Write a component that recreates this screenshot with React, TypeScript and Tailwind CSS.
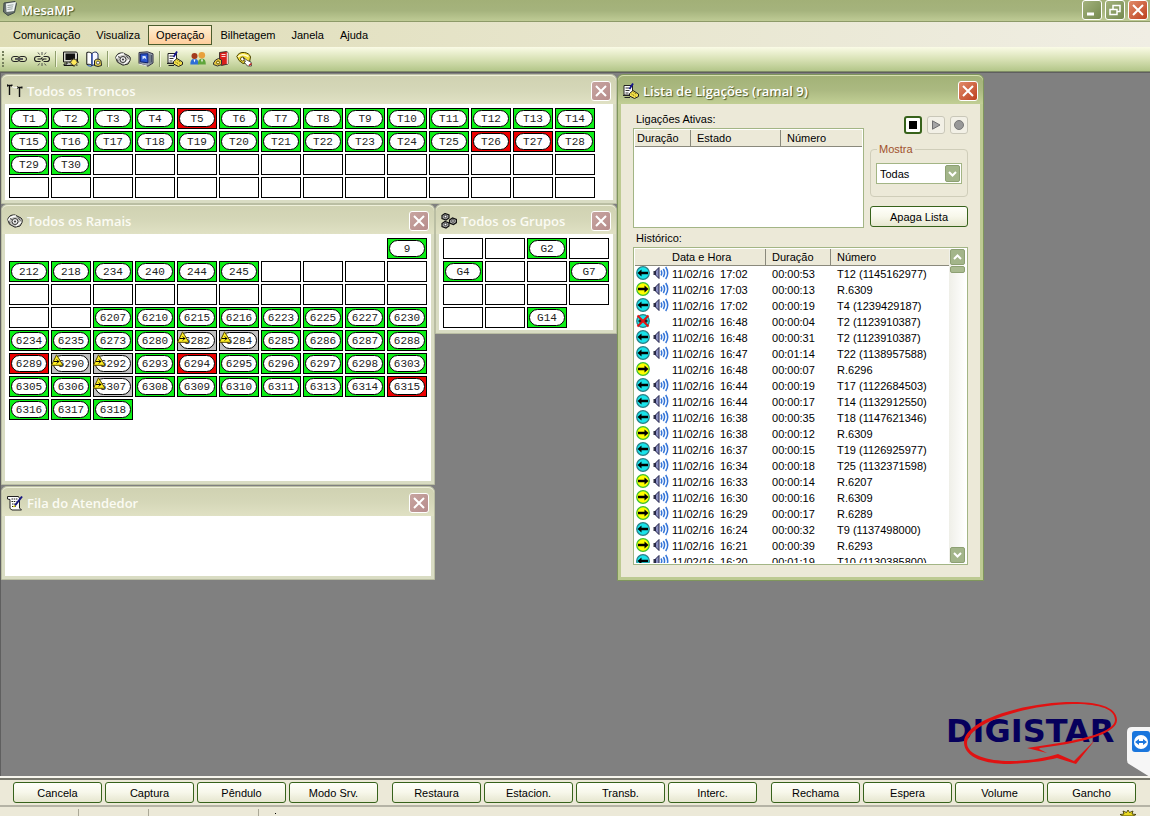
import { useState, type ReactNode } from 'react'
import clsx from 'clsx'

type CallKind = 'in' | 'out' | 'missed'

interface Call {
  kind: CallKind
  recorded: boolean
  date: string
  duration: string
  number: string
}

const history: Call[] = [
  { kind: 'in', recorded: true, date: '11/02/16  17:02', duration: '00:00:53', number: 'T12 (1145162977)' },
  { kind: 'out', recorded: true, date: '11/02/16  17:03', duration: '00:00:13', number: 'R.6309' },
  { kind: 'in', recorded: true, date: '11/02/16  17:02', duration: '00:00:19', number: 'T4 (1239429187)' },
  { kind: 'missed', recorded: false, date: '11/02/16  16:48', duration: '00:00:04', number: 'T2 (1123910387)' },
  { kind: 'in', recorded: true, date: '11/02/16  16:48', duration: '00:00:31', number: 'T2 (1123910387)' },
  { kind: 'in', recorded: true, date: '11/02/16  16:47', duration: '00:01:14', number: 'T22 (1138957588)' },
  { kind: 'out', recorded: false, date: '11/02/16  16:48', duration: '00:00:07', number: 'R.6296' },
  { kind: 'in', recorded: true, date: '11/02/16  16:44', duration: '00:00:19', number: 'T17 (1122684503)' },
  { kind: 'in', recorded: true, date: '11/02/16  16:44', duration: '00:00:17', number: 'T14 (1132912550)' },
  { kind: 'in', recorded: true, date: '11/02/16  16:38', duration: '00:00:35', number: 'T18 (1147621346)' },
  { kind: 'out', recorded: true, date: '11/02/16  16:38', duration: '00:00:12', number: 'R.6309' },
  { kind: 'in', recorded: true, date: '11/02/16  16:37', duration: '00:00:15', number: 'T19 (1126925977)' },
  { kind: 'in', recorded: true, date: '11/02/16  16:34', duration: '00:00:18', number: 'T25 (1132371598)' },
  { kind: 'out', recorded: true, date: '11/02/16  16:33', duration: '00:00:14', number: 'R.6207' },
  { kind: 'out', recorded: true, date: '11/02/16  16:30', duration: '00:00:16', number: 'R.6309' },
  { kind: 'out', recorded: true, date: '11/02/16  16:29', duration: '00:00:17', number: 'R.6289' },
  { kind: 'in', recorded: true, date: '11/02/16  16:24', duration: '00:00:32', number: 'T9 (1137498000)' },
  { kind: 'out', recorded: true, date: '11/02/16  16:21', duration: '00:00:39', number: 'R.6293' },
  { kind: 'in', recorded: true, date: '11/02/16  16:20', duration: '00:01:19', number: 'T10 (1130385800)' }
]

// '' is an empty position, null leaves a hole in the grid
type Slot = string | null

const trunks: Slot[] = Array.from({ length: 56 }, (_, i) => (i < 30 ? `T${i + 1}` : ''))

const extensions: Slot[] = [
  null, null, null, null, null, null, null, null, null, '9',
  '212', '218', '234', '240', '244', '245', '', '', '', '',
  '', '', '', '', '', '', '', '', '', '',
  '', '', '6207', '6210', '6215', '6216', '6223', '6225', '6227', '6230',
  '6234', '6235', '6273', '6280', '6282', '6284', '6285', '6286', '6287', '6288',
  '6289', '6290', '6292', '6293', '6294', '6295', '6296', '6297', '6298', '6303',
  '6305', '6306', '6307', '6308', '6309', '6310', '6311', '6313', '6314', '6315',
  '6316', '6317', '6318'
]

const groups: Slot[] = ['', '', 'G2', '', 'G4', '', '', 'G7', '', '', '', '', '', '', 'G14']

const busy = ['T5', 'T26', 'T27', '6289', '6294', '6315']
const diverted = ['6282', '6284', '6290', '6292', '6307']

const menus = ['Comunicação', 'Visualiza', 'Operação', 'Bilhetagem', 'Janela', 'Ajuda']

const commands = [
  ['Cancela', 'Captura', 'Pêndulo', 'Modo Srv.'],
  ['Restaura', 'Estacion.', 'Transb.', 'Interc.'],
  ['Rechama', 'Espera', 'Volume', 'Gancho']
]

/* ---------- icons ---------- */

function Icon({ children }: { children: ReactNode }) {
  return (
    <svg viewBox="0 0 16 16" className="size-4 shrink-0" fill="none" aria-hidden="true">
      {children}
    </svg>
  )
}

const LinkIcon = () => (
  <Icon>
    <rect x="0.5" y="5.5" width="8" height="5" rx="2.5" stroke="#222" />
    <rect x="7.5" y="5.5" width="8" height="5" rx="2.5" stroke="#222" />
    <path d="M4 8h8" stroke="#222" strokeWidth="2" />
    <path d="M4 8h8" stroke="#ddd" strokeWidth="0.6" />
  </Icon>
)

const UnlinkIcon = () => (
  <Icon>
    <path d="M6.5 5.5H3a2.5 2.5 0 0 0 0 5h3.5M9.5 5.5H13a2.5 2.5 0 0 1 0 5H9.5M3.500 8H7l1.500-1.500M12.500 8H9.500L8 9.500" stroke="#222" strokeWidth="1.200" />
    <path d="M8 1v3M8 12v3M4 1.500l1.500 2M12 1.500l-1.500 2M4 14.500l1.500-2M12 14.500l-1.500-2" stroke="#444" strokeWidth="0.900" />
  </Icon>
)

const ScreenIcon = () => (
  <Icon>
    <path d="M.5 1h13l1 1.500V11H.5z" fill="#d8d8d0" stroke="#111" />
    <path d="M2.500 2.500h9.500V9H2.500z" fill="#111" />
    <path d="M4 11v2H1v1.500h10" fill="#bbb" stroke="#111" />
    <path d="M11 7l1 2 2-1-.6 2.200 2.400 1-2.400 1 .8 2.300-2.200-.9-1 2-1-2-2.200.9.800-2.200-2-1 2-1.100-.8-2.100 2 .9z" fill="#ffe95a" stroke="#222" strokeWidth="0.700" />
  </Icon>
)

const BookIcon = () => (
  <Icon>
    <path d="M.8 1.500c2-.8 3.700 0 5.200 1v12c-1.500-1.200-3.200-1.500-5.200-1z" fill="#fff" stroke="#111" />
    <path d="M6 2.500c1.500-1.500 3.500-1.800 5-1l1 1.500v11H7l-1 .5z" fill="#f7f7ff" stroke="#16265a" />
    <path d="M1.500 14.500l4 1M6 3v11" stroke="#2a55c9" />
    <path d="M8.500 10c.5-2.500 6-2.500 6.500 0l.5 4.500-3.500 1-3.500-1z" fill="#e6d44c" stroke="#222" />
    <circle cx="12" cy="11.700" r="1.600" fill="#fff" stroke="#555" />
  </Icon>
)

const PhoneIcon = () => (
  <Icon>
    <path d="M.8 7C1 3.500 4 1.500 8 2l6 3c1.500 1.200 1.500 3 1 4.500l-2 3.500-5 1.200-5.500-3z" fill="#c9c9c4" stroke="#222" />
    <path d="M1 7.500c2-3 4.500-4.700 8-4.500M9 13l5-4" stroke="#fff" strokeWidth="1.300" />
    <circle cx="8" cy="8.500" r="3" fill="#eee" stroke="#333" />
    <circle cx="8" cy="8.500" r="1.100" fill="#444" />
    <path d="M1 8l2.500 2M3 5.500l2 1M11 4.500l2.500 3" stroke="#444" />
  </Icon>
)

const TerminalIcon = () => (
  <Icon>
    <path d="M1 1.500l8.500-.7 5.500 2V12l-5 3.200-9-2.700z" fill="#9aa1b0" stroke="#334" />
    <path d="M2.300 3L10 2.800v9l-7.700-1z" fill="#2c56cf" stroke="#0b1d66" />
    <path d="M4.500 8.500V5h3l1 3.500-2-1.500z" fill="#d5e5ff" />
    <path d="M12 3.500v9M13.500 4v7.500" stroke="#4b5568" />
    <path d="M1 13l8 2" stroke="#eee" />
  </Icon>
)

const NoteIcon = () => (
  <Icon>
    <path d="M1 2.500h8.500v9.500H1z" fill="#fff" stroke="#222" />
    <path d="M2.500 5H6M2.500 7.500h4M2.500 10h3" stroke="#333" />
    <path d="M10 .5L6.500 6" stroke="#14148c" strokeWidth="1.800" />
    <path d="M0 12.500h6M1.500 14.500H7" stroke="#222" />
    <path d="M6.500 10.500L10 7.500l5.500 3.500v2.500L11.500 15.500l-5-2.500z" fill="#f3e14b" stroke="#222" />
    <path d="M8.500 11l4 2.300M10.500 9.500l3.500 2" stroke="#6a5c00" strokeDasharray="1 1" />
  </Icon>
)

const PeopleIcon = () => (
  <Icon>
    <path d="M.3 13.500c0-4 1.500-6 4.200-6s4 2 4 6z" fill="#2f6fd6" />
    <circle cx="4.500" cy="4.900" r="3" fill="#a33a1c" />
    <path d="M7.800 13.500c0-4 1.500-6 4.200-6s3.800 2 3.800 6z" fill="#5fa53a" />
    <circle cx="11.800" cy="4.200" r="3.300" fill="#e8a13c" />
    <path d="M3.500 8.500l1 3 1-3M11 8.500l1 3 1-3" fill="#fff" />
  </Icon>
)

const DirectoryIcon = () => (
  <Icon>
    <path d="M6.500 1.500l7-1 1.500 1v11.500l-6.500 1.500-2-1.500z" fill="#d9201d" stroke="#222" strokeWidth="0.800" />
    <path d="M14.300 1.500v11.500" stroke="#fff" />
    <path d="M8.500 3.500h4M8.500 5.500h4" stroke="#ffd8d8" />
    <path d="M.5 12l2-3 3-1.500 3 1.500v4.500l-4 1.500-4-1.500z" fill="#e8c83e" stroke="#333" />
    <circle cx="5" cy="11.500" r="1.500" fill="#fff6b5" stroke="#665500" />
  </Icon>
)

const DialIcon = () => (
  <Icon>
    <path d="M.8 5.500C2 2.500 5 1 8.500 1.500c3 .5 5.500 2 6 4.500l-1 5L7 12.500l-4-3z" fill="#f1dc3c" stroke="#4a4200" />
    <path d="M2 6c2-2.500 6-3 10.500-.5" stroke="#fffbd0" strokeWidth="1.500" />
    <circle cx="6.500" cy="8" r="2" fill="#fff" stroke="#665500" />
    <path d="M7 6.500l4.500 3 3.500 1.500.5 4h-4L8 11l1.500-.5z" fill="#fff" stroke="#222" strokeWidth="0.700" />
    <path d="M13 14.500l2.500-2" stroke="#c01a1a" strokeWidth="1.500" />
  </Icon>
)

const TrunkIcon = () => (
  <Icon>
    <path d="M0 2.500h5M2.500 3v9M10 4.500h5M12.500 5v9" stroke="#111" strokeWidth="1.400" />
    <path d="M.5 1.500v2M5 1.500v2M10.500 3.500v2M15 3.500v2" stroke="#111" />
    <path d="M5 3.500q2.500 2 5.500 1" stroke="#fff" />
  </Icon>
)

const GroupIcon = () => (
  <Icon>
    {[[4.5, 3.5], [4.5, 11.5], [12, 8]].map(([x, y]) => (
      <g key={`${x}${y}`}>
        <path d={`M${x - 3.5} ${y - 1}l3-2 4 1.500v3l-3 2-4-1.500z`} fill="#aaa" stroke="#111" strokeWidth="1.200" />
        <circle cx={x} cy={y} r="1.300" fill="#fff" stroke="#222" strokeWidth="0.800" />
      </g>
    ))}
  </Icon>
)

const QueueIcon = () => (
  <Icon>
    <path d="M.5 1.500h11l1 2V13l2 2H5l-2-1.500V4.500L.5 4z" fill="#fff" stroke="#222" />
    <path d="M4.500 4h6M4.500 6.500h5M5 9h4M5 11.500h4" stroke="#222" strokeDasharray="1.500 .7" />
    <path d="M15 1.500L8 10.500" stroke="#15157e" strokeWidth="2" />
    <path d="M8 10.500l-1.500 1.500" stroke="#e2d000" strokeWidth="1.500" />
  </Icon>
)

const AppIcon = () => (
  <Icon>
    <path d="M2 3l11-1.500 1.500 2-2 9-6.500 3L1.500 12z" fill="#69736f" stroke="#3f4948" />
    <path d="M4 3.500l10-1.500L12 11l-7.500 1z" fill="#eef3f2" />
    <path d="M5.500 5.500l6-.7M5.500 7.500l5.500-.7M5.500 9.500l5-.7" stroke="#9aa6a4" />
  </Icon>
)

function CallIcon({ kind }: { kind: CallKind }) {
  return (
    <svg viewBox="0 0 14 14" className="size-3.5" aria-hidden="true">
      <circle cx="7" cy="7" r="6.300" fill={kind === 'out' ? '#ffff00' : '#19e3ea'} stroke={kind === 'out' ? '#3fbf2f' : '#2a7f86'} strokeWidth="1.200" />
      {kind === 'in' && <path d="M1.500 7l4-3.500v2.200h6.500v2.600H5.500v2.200z" fill="#000" />}
      {kind === 'out' && <path d="M12.500 7l-4-3.500v2.200H2v2.600h6.500v2.200z" fill="#000" />}
      {kind === 'missed' && (
        <>
          <path d="M2 7l3-3v2h4V4l3 3-3 3V8H5v2z" fill="#222" />
          <path d="M1.500 1.500l11 11M12.500 1.500l-11 11" stroke="#e01515" strokeWidth="2" />
        </>
      )}
    </svg>
  )
}

const SpeakerIcon = () => (
  <svg viewBox="0 0 16 14" className="h-3.5 w-4" fill="none" aria-hidden="true">
    <path d="M.5 5H2v4H.5z" fill="#334" />
    <path d="M2.500 5L6 1.500v11L2.500 9z" fill="#8a8fc0" stroke="#23234a" />
    <path d="M8 4.500q1.500 2.500 0 5M10.300 3q2.500 4 0 8M12.700 1q4 6 0 12" stroke="#3374d8" strokeWidth="1.500" />
  </svg>
)

const WarnIcon = () => (
  <svg viewBox="0 0 13 12" className="absolute -left-px top-0 h-3 w-[13px]" fill="none" aria-hidden="true">
    <path d="M5.500.8L12 11.300H.5z" fill="#ffee22" stroke="#554a00" />
    <path d="M3 7.500h5M5.800 5.500l2 2-2 2" stroke="#000" />
  </svg>
)

/* ---------- shared controls ---------- */

function CaptionButton({ label, tone, children }: { label: string; tone: 'green' | 'red' | 'dim'; children: ReactNode }) {
  return (
    <button
      aria-label={label}
      className={clsx(
        'flex size-5 shrink-0 items-center justify-center rounded-[3px] border border-white',
        tone === 'green' && 'bg-linear-to-br from-[#a3b27d] to-[#768a4f]',
        tone === 'red' && 'bg-linear-to-br from-[#e08a68] to-[#bd3f1d]',
        tone === 'dim' && 'bg-linear-to-br from-[#c7a5a0] to-[#b78c8c]'
      )}
    >
      <svg viewBox="0 0 18 18" className="size-[18px]" fill="none" stroke="#fff" strokeWidth="2" aria-hidden="true">
        {children}
      </svg>
    </button>
  )
}

const closeGlyph = <path d="M4 4l10 10M14 4L4 14" />

function CommandButton({ children }: { children: ReactNode }) {
  return (
    <button className="h-[21px] w-full rounded-[3px] border border-[#37621b] bg-linear-to-b from-[#fffffa] via-[#f7f7ea] to-[#e6e6cf] text-center leading-4">
      {children}
    </button>
  )
}

interface WindowProps {
  title: string
  icon: ReactNode
  active?: boolean
  className: string
  children?: ReactNode
}

function MdiWindow({ title, icon, active, className, children }: WindowProps) {
  return (
    <section
      className={clsx(
        'absolute flex flex-col rounded-t-md border',
        active ? 'border-[#7f965c] bg-[#bdca92]' : 'border-[#babea3] bg-[#d9dcc3]',
        className
      )}
    >
      <header
        className={clsx(
          'flex h-[29px] shrink-0 items-center gap-1 rounded-t-md border-t px-[5px] pt-px',
          active
            ? 'border-[#d6dfb0] bg-linear-to-b from-[#a3b277] via-[#abb981] to-[#c2cf95]'
            : 'border-[#eff0da] bg-linear-to-b from-[#d0d2b2] via-[#d5d7b8] to-[#e0e1c4]'
        )}
      >
        {icon}
        <h2
          className={clsx(
            "grow font-['Open_Sans',sans-serif] text-[13px] font-semibold leading-4",
            active ? 'text-white [text-shadow:1px_1px_1px_#4c5a2b]' : 'text-[#fbfbf3]'
          )}
        >
          {title}
        </h2>
        <CaptionButton label={`Fechar ${title}`} tone={active ? 'red' : 'dim'}>
          {closeGlyph}
        </CaptionButton>
      </header>
      <div className={clsx('mx-[3px] mb-[3px] min-h-0 grow', active ? 'bg-[#ece9d8]' : 'bg-white')}>{children}</div>
    </section>
  )
}

function StatusCell({ slot }: { slot: Slot }) {
  if (slot === null) return <span />
  if (slot === '') return <span className="border border-black bg-white" />
  const isDiverted = diverted.includes(slot)
  return (
    <button
      className={clsx(
        'relative border border-black p-px',
        busy.includes(slot) ? 'bg-[#ee0000]' : isDiverted ? 'bg-[#c0c0c0]' : 'bg-[#0cf016]'
      )}
    >
      <span className="flex h-full items-center justify-center rounded-[9px] border border-black bg-white font-['Liberation_Mono',monospace] leading-3 text-[#222]">
        {slot}
      </span>
      {isDiverted && <WarnIcon />}
    </button>
  )
}

function StatusGrid({ slots, className }: { slots: Slot[]; className: string }) {
  return (
    <div className={clsx('grid auto-rows-[21px] gap-[2px] px-1 pt-1', className)}>
      {slots.map((slot, i) => (
        <StatusCell key={i} slot={slot} />
      ))}
    </div>
  )
}

function ColumnHead({ children }: { children: ReactNode }) {
  return (
    <th className="p-0 font-normal" scope="col">
      <div className="h-4 border-l border-[#8a897c] pl-[6px] leading-4">{children}</div>
    </th>
  )
}

/* ---------- call list ---------- */

function CallList() {
  const [filter, setFilter] = useState('Todas')

  return (
    <div className="flex h-full flex-col px-3 pb-3 pt-[7px]">
      <div className="flex gap-[6px]">
        <div className="flex min-w-0 grow flex-col">
          <h3 className="pl-[3px] leading-4">Ligações Ativas:</h3>
          <div className="mt-px h-[100px] border border-[#a3b585] bg-white p-px">
            <table className="w-full table-fixed border-collapse text-left">
              <colgroup>
                <col className="w-[55px]" />
                <col className="w-[90px]" />
                <col />
              </colgroup>
              <thead className="border-b border-[#8a897c] bg-[#ece9d8]">
                <tr>
                  <th scope="col" className="p-0 pl-[2px] font-normal leading-4">Duração</th>
                  <ColumnHead>Estado</ColumnHead>
                  <ColumnHead>Número</ColumnHead>
                </tr>
              </thead>
            </table>
          </div>
        </div>

        <div className="flex w-[98px] shrink-0 flex-col">
          <div className="mt-[5px] flex justify-end gap-[5px]">
            <button aria-label="Parar" className="flex size-[18px] items-center justify-center rounded-[3px] border-2 border-[#37621b] bg-white">
              <span className="size-2 bg-black" />
            </button>
            <button aria-label="Reproduzir" className="flex size-[18px] items-center justify-center rounded-[3px] border border-[#c9c7b8] bg-[#f2f0e6]">
              <svg viewBox="0 0 10 10" className="size-[10px]" aria-hidden="true">
                <path d="M1.500.8L9 5 1.500 9.200z" fill="#a5a5a5" stroke="#6f6f6f" />
              </svg>
            </button>
            <button aria-label="Gravar" className="flex size-[18px] items-center justify-center rounded-[3px] border border-[#c9c7b8] bg-[#f2f0e6]">
              <span className="size-[10px] rounded-full border border-[#777] bg-[#989898]" />
            </button>
          </div>
          <fieldset className="mt-[9px] h-[54px] rounded-[4px] border border-[#cfcdb9] px-[5px]">
            <legend className="ml-px px-[2px] leading-3 text-[#a0522d]">Mostra</legend>
            <div className="relative mt-2">
              <select
                aria-label="Mostra"
                value={filter}
                onChange={(e) => setFilter(e.target.value)}
                className="h-[21px] w-full appearance-none border border-[#a3b585] bg-white pl-[3px] leading-4"
              >
                <option>Todas</option>
                <option>Ativas</option>
              </select>
              <span className="pointer-events-none absolute right-[2px] top-[2px] flex h-[17px] w-[15px] items-center justify-center rounded-[2px] border border-[#8da073] bg-[#a3b58a]">
                <svg viewBox="0 0 9 6" className="h-[6px] w-[9px]" fill="none" stroke="#fff" strokeWidth="2" aria-hidden="true">
                  <path d="M1 1l3.500 3.500L8 1" />
                </svg>
              </span>
            </div>
          </fieldset>
          <div className="mt-[9px]">
            <CommandButton>Apaga Lista</CommandButton>
          </div>
        </div>
      </div>

      <h3 className="mt-[2px] pl-[3px] leading-4">Histórico:</h3>
      <div className="mt-px flex min-h-0 grow overflow-hidden border border-[#a3b585] bg-white p-px">
        <div className="grow overflow-hidden">
          <table className="w-full table-fixed border-collapse text-left">
            <colgroup>
              <col className="w-[17px]" />
              <col className="w-[20px]" />
              <col className="w-[93px]" />
              <col className="w-[65px]" />
              <col />
            </colgroup>
            <thead className="border-b border-[#8a897c] bg-[#ece9d8]">
              <tr>
                <th colSpan={3} scope="col" className="p-0 pl-[37px] font-normal leading-4">Data e Hora</th>
                <ColumnHead>Duração</ColumnHead>
                <ColumnHead>Número</ColumnHead>
              </tr>
            </thead>
            <tbody>
              {history.map((call, i) => (
                <tr key={i} className="h-4 leading-4">
                  <td className="p-0 pl-px align-top"><CallIcon kind={call.kind} /></td>
                  <td className="p-0 pl-px align-top">{call.recorded && <SpeakerIcon />}</td>
                  <td className="whitespace-pre p-0">{call.date}</td>
                  <td className="p-0 pl-[7px]">{call.duration}</td>
                  <td className="p-0 pl-[7px]">{call.number}</td>
                </tr>
              ))}
            </tbody>
          </table>
        </div>
        <div className="flex w-[17px] shrink-0 flex-col bg-linear-to-r from-[#efefe8] to-white px-px">
          <button aria-label="Rolar para cima" className="flex h-4 w-[15px] items-center justify-center rounded-[2px] border border-[#8da073] bg-[#a3b58a]">
            <svg viewBox="0 0 9 6" className="h-[6px] w-[9px]" fill="none" stroke="#fff" strokeWidth="2" aria-hidden="true">
              <path d="M1 5l3.500-3.500L8 5" />
            </svg>
          </button>
          <span className="mt-px h-[7px] w-[15px] rounded-[2px] border border-[#8da073] bg-[#a9ba90]" />
          <button aria-label="Rolar para baixo" className="mt-auto flex h-4 w-[15px] items-center justify-center rounded-[2px] border border-[#8da073] bg-[#a3b58a]">
            <svg viewBox="0 0 9 6" className="h-[6px] w-[9px]" fill="none" stroke="#fff" strokeWidth="2" aria-hidden="true">
              <path d="M1 1l3.500 3.500L8 1" />
            </svg>
          </button>
        </div>
      </div>
    </div>
  )
}

/* ---------- toolbar ---------- */

const toolGroups = [
  [{ label: 'Conectar', icon: <LinkIcon /> }, { label: 'Desconectar', icon: <UnlinkIcon /> }],
  [{ label: 'Configurar', icon: <ScreenIcon /> }, { label: 'Agenda', icon: <BookIcon /> }],
  [{ label: 'Telefone', icon: <PhoneIcon /> }, { label: 'Terminal', icon: <TerminalIcon /> }],
  [
    { label: 'Lista de ligações', icon: <NoteIcon /> },
    { label: 'Usuários', icon: <PeopleIcon /> },
    { label: 'Catálogo', icon: <DirectoryIcon /> },
    { label: 'Discar', icon: <DialIcon /> }
  ]
]

function Toolbar() {
  return (
    <div className="flex h-[25px] shrink-0 items-center border-b border-[#7f8c66] bg-linear-to-b from-[#fafbe6] via-[#d9e2b6] to-[#b3c689] pl-[2px]">
      <span className="mr-[3px] h-4 border-l-2 border-dotted border-[#76805e]" />
      {toolGroups.map((tools, i) => (
        <div key={i} className="flex items-center">
          {i > 0 && <span className="mx-[2px] h-4 w-[2px] border-l border-[#8f9f6d] bg-[#f4f6e0]" />}
          {tools.map((tool) => (
            <button key={tool.label} aria-label={tool.label} className="flex h-[22px] w-[23px] items-center justify-center">
              {tool.icon}
            </button>
          ))}
        </div>
      ))}
    </div>
  )
}

function Logo() {
  return (
    <svg viewBox="0 0 220 86" className="absolute bottom-0 right-0 h-[86px] w-[220px]" aria-label="Digistar">
      <text x="16" y="52" fill="#06005c" fontFamily="DejaVu Sans, sans-serif" fontSize="32" fontWeight="700">DIGISTAR</text>
      <path
        d="M110 58C160 52 187 42 187 30C187 16 165 12 143 12C95 12 33 30 34 53C35 68 55 74 80 74C100 73 115 71 127 68L146 74L165 50L144 71L128 64C115 68 100 71 80 71C58 71 37 65 37 53C38 33 95 15 143 14C164 14 185 17 185 30C185 41 155 50 110 56L97 58L117 63L109 59Z"
        fill="#e01212"
      />
      <path d="M197 42q0-5 5-5h18v50l-21-13q-2-1-2-4z" fill="#f6f6f6" />
      <rect x="202" y="41" width="18" height="21" rx="3" fill="#1a76dd" />
      <circle cx="211" cy="52" r="7" fill="#fff" />
      <path d="M205 52l4-3v2h4v-2l4 3-4 3v-2h-4v2z" fill="#1a76dd" />
    </svg>
  )
}

export default function App() {
  return (
    <div className="flex h-screen flex-col overflow-hidden bg-[#ece9d8] font-['Liberation_Sans',Arial,sans-serif] text-[11px] text-black">
      <header className="flex h-[22px] shrink-0 items-start border-b border-[#8d9a68] bg-linear-to-b from-[#a2b077] via-[#a5b37d] to-[#bfcb95] px-[2px]">
        <AppIcon />
        <h1 className="ml-[3px] grow pt-[2px] font-['Open_Sans',sans-serif] text-[13px] font-semibold leading-4 text-white [text-shadow:1px_1px_1px_#4c5a2b]">
          MesaMP
        </h1>
        <div className="flex gap-[3px]">
          <CaptionButton label="Minimizar" tone="green"><path d="M4 13h7" strokeWidth="3" /></CaptionButton>
          <CaptionButton label="Restaurar" tone="green">
            <path d="M4 8.500h7v5H4zM7 8V4.500h7v6h-3" strokeWidth="1.500" />
          </CaptionButton>
          <CaptionButton label="Fechar" tone="red">{closeGlyph}</CaptionButton>
        </div>
      </header>

      <nav className="flex h-[25px] shrink-0 items-center bg-linear-to-r from-[#dedcb4] to-[#f0eee4] pl-[5px]">
        {menus.map((menu) => (
          <button
            key={menu}
            className={clsx(
              'h-5 border px-[7px] leading-4',
              menu === 'Operação' ? 'border-[#4c5d2d] bg-linear-to-b from-[#fff0d3] to-[#ffce9c]' : 'border-transparent'
            )}
          >
            {menu}
          </button>
        ))}
      </nav>

      <Toolbar />

      <main className="relative min-h-0 grow overflow-hidden border-l border-t border-[#5f5f5f] bg-[#808080]">
        <Logo />
        <MdiWindow title="Todos os Troncos" icon={<TrunkIcon />} className="left-0 top-px h-[130px] w-[616px]">
          <StatusGrid slots={trunks} className="grid-cols-[repeat(14,40px)]" />
        </MdiWindow>
        <MdiWindow title="Todos os Ramais" icon={<PhoneIcon />} className="left-0 top-[131px] h-[281px] w-[434px]">
          <StatusGrid slots={extensions} className="grid-cols-[repeat(10,40px)]" />
        </MdiWindow>
        <MdiWindow title="Todos os Grupos" icon={<GroupIcon />} className="left-[434px] top-[131px] h-[130px] w-[182px]">
          <StatusGrid slots={groups} className="grid-cols-[repeat(4,40px)]" />
        </MdiWindow>
        <MdiWindow title="Fila do Atendedor" icon={<QueueIcon />} className="left-0 top-[413px] h-[94px] w-[434px]" />
        <MdiWindow title="Lista de Ligações (ramal 9)" icon={<NoteIcon />} active className="left-[616px] top-px h-[507px] w-[367px]">
          <CallList />
        </MdiWindow>
      </main>

      <footer className="shrink-0">
        <div className="flex gap-[14px] border-y-2 border-t-[#f7f6ee] border-b-[#b5b3a5] pb-[2px] pl-[13px] pr-[14px] pt-1 shadow-[inset_0_2px_0_#77776c]">
          {commands.map((group) => (
            <div key={group[0]} className="grid min-w-0 flex-1 grid-cols-4 gap-[3px]">
              {group.map((name) => (
                <CommandButton key={name}>{name}</CommandButton>
              ))}
            </div>
          ))}
        </div>
        <div className="flex h-[9px] items-end overflow-hidden">
          <span className="h-[7px] w-[79px] border-r border-[#aaa897]" />
          <span className="h-[7px] w-[70px] border-r border-[#aaa897]" />
          <span className="h-[7px] w-[110px] border-r border-[#aaa897]" />
          <span className="mb-[2px] ml-4 size-px bg-black" />
          <svg viewBox="0 0 16 6" className="ml-auto mr-[14px] h-[6px] w-4" aria-hidden="true">
            <path d="M0 4.500l4-.5-1-3 3.500 1.500L8 0l1.500 2.500L13 1l-1 3 4 .5L13 6H3z" fill="#e9d820" stroke="#332f00" strokeWidth="0.800" />
          </svg>
        </div>
      </footer>
    </div>
  )
}
